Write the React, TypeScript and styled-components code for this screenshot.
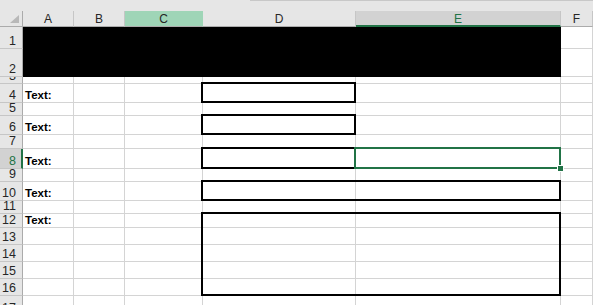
import React from 'react';
import styled, { createGlobalStyle } from 'styled-components';

// sheet geometry, taken from the screenshot (px, bottom gridline included)
const ROW_HEIGHTS = [22, 28, 7, 19, 13, 19, 14, 20, 13, 19, 13, 14, 17, 17, 17, 17, 20];
const COL_WIDTHS = [51, 51, 78, 153, 205];
const COLUMNS = ['A', 'B', 'C', 'D', 'E', 'F'];
const LABEL_ROWS = [4, 6, 8, 10, 12];
const ACTIVE_ROW = 8;
const ACTIVE_COL = 'E';
const HOVER_COL = 'C';

// bordered ranges, as grid areas (grid row = sheet row + 1, grid col = index + 2)
const BOXES = [
  { col: '5 / 6', row: '5 / 6' },
  { col: '5 / 6', row: '7 / 8' },
  { col: '5 / 6', row: '9 / 10' },
  { col: '5 / 7', row: '11 / 12' },
  { col: '5 / 7', row: '13 / 18' },
];

const GlobalStyle = createGlobalStyle`
  body {
    margin: 0;
    background: #fff;
    overflow: hidden;
  }
`;

const Sheet = styled.div`
  display: flex;
  flex-direction: column;
  width: 593px;
  height: 305px;
  overflow: hidden;
  background: #fff;
  font-family: 'Liberation Sans', Arial, sans-serif;
`;

const TopStrip = styled.div`
  display: flex;
  height: 11px;
  flex-shrink: 0;
  background: #e6e6e6;
`;

const StripGap = styled.div`
  width: 250px;
`;

const StripRule = styled.div`
  flex: 1;
  border-top: 1px solid #c8c8c8;
`;

const Grid = styled.div`
  display: grid;
  grid-template-columns: 23px ${COL_WIDTHS.map((w) => `${w}px`).join(' ')} 1fr;
  grid-template-rows: 16px ${ROW_HEIGHTS.map((h) => `${h}px`).join(' ')};
`;

const Corner = styled.div`
  grid-column: 1;
  grid-row: 1;
  display: flex;
  align-items: flex-end;
  justify-content: flex-end;
  padding: 0 3px 3px 0;
  background: #e6e6e6;
  border-right: 1px solid #ababab;
  border-bottom: 1px solid #ababab;
  box-sizing: border-box;
`;

const ColHeader = styled.div<{ $col: number; $active?: boolean; $hover?: boolean }>`
  grid-column: ${(p) => p.$col};
  grid-row: 1;
  display: flex;
  align-items: center;
  justify-content: center;
  box-sizing: border-box;
  font-size: 12px;
  color: ${(p) => (p.$active ? '#217346' : '#262626')};
  background: ${(p) => (p.$hover ? '#9fd5b7' : p.$active ? '#d2d2d2' : '#e6e6e6')};
  border-right: 1px solid ${(p) => (p.$hover ? '#9fd5b7' : '#c6c6c6')};
  border-bottom: ${(p) => (p.$active ? '2px solid #217346' : '1px solid #ababab')};
  padding-top: ${(p) => (p.$active ? '2px' : '1px')};
`;

const RowHeader = styled.div<{ $row: number; $active?: boolean }>`
  grid-column: 1;
  grid-row: ${(p) => p.$row};
  display: flex;
  align-items: flex-end;
  justify-content: flex-end;
  overflow: hidden;
  box-sizing: border-box;
  padding: 0 ${(p) => (p.$active ? '5px' : '6px')} 1px 0;
  font-size: 12.5px;
  line-height: 11px;
  color: ${(p) => (p.$active ? '#217346' : '#262626')};
  background: ${(p) => (p.$active ? '#d2d2d2' : '#e6e6e6')};
  border-right: ${(p) => (p.$active ? '2px solid #217346' : '1px solid #ababab')};
  border-bottom: 1px solid #c6c6c6;
`;

const Cell = styled.div<{ $row: number; $col: number }>`
  grid-column: ${(p) => p.$col};
  grid-row: ${(p) => p.$row};
  display: flex;
  align-items: flex-end;
  overflow: hidden;
  box-sizing: border-box;
  padding: 0 0 1px 2px;
  font-size: 11.5px;
  line-height: 12px;
  color: #000;
  border-right: 1px solid #d4d4d4;
  border-bottom: 1px solid #d4d4d4;
`;

const Label = styled.span`
  font-weight: 700;
`;

const Band = styled.div`
  grid-column: 2 / 7;
  grid-row: 2 / 4;
  background: #000;
  z-index: 1;
`;

const RangeBox = styled.div<{ $col: string; $row: string }>`
  grid-column: ${(p) => p.$col};
  grid-row: ${(p) => p.$row};
  margin: -2px 0 0 -2px;
  border: 2px solid #000;
  z-index: 2;
`;

const Selection = styled.div`
  position: relative;
  grid-column: 6 / 7;
  grid-row: 9 / 10;
  margin: -2px 0 0 -2px;
  border: 2px solid #217346;
  z-index: 3;
`;

const FillHandle = styled.div`
  position: absolute;
  right: -4px;
  bottom: -4px;
  width: 5px;
  height: 5px;
  background: #217346;
  box-shadow: 0 0 0 1px #fff;
`;

const App: React.FC = () => {
  const rows = ROW_HEIGHTS.map((_, i) => i + 1);

  return (
    <Sheet>
      <GlobalStyle />
      <TopStrip>
        <StripGap />
        <StripRule />
      </TopStrip>

      <Grid>
        <Corner>
          <svg width="9" height="8" viewBox="0 0 9 8">
            <polygon points="9,0 9,8 0,8" fill="#b8b8b8" />
          </svg>
        </Corner>
        {COLUMNS.map((c, ci) => (
          <ColHeader key={c} $col={ci + 2} $active={c === ACTIVE_COL} $hover={c === HOVER_COL}>
            {c}
          </ColHeader>
        ))}

        {rows.map((r) => (
          <React.Fragment key={r}>
            <RowHeader $row={r + 1} $active={r === ACTIVE_ROW}>
              {r}
            </RowHeader>
            {COLUMNS.map((c, ci) => (
              <Cell key={c} $row={r + 1} $col={ci + 2}>
                {c === 'A' && LABEL_ROWS.includes(r) && <Label>Text:</Label>}
              </Cell>
            ))}
          </React.Fragment>
        ))}

        <Band />
        {BOXES.map((b, i) => (
          <RangeBox key={i} $col={b.col} $row={b.row} />
        ))}
        <Selection>
          <FillHandle />
        </Selection>
      </Grid>
    </Sheet>
  );
};

export default App;
